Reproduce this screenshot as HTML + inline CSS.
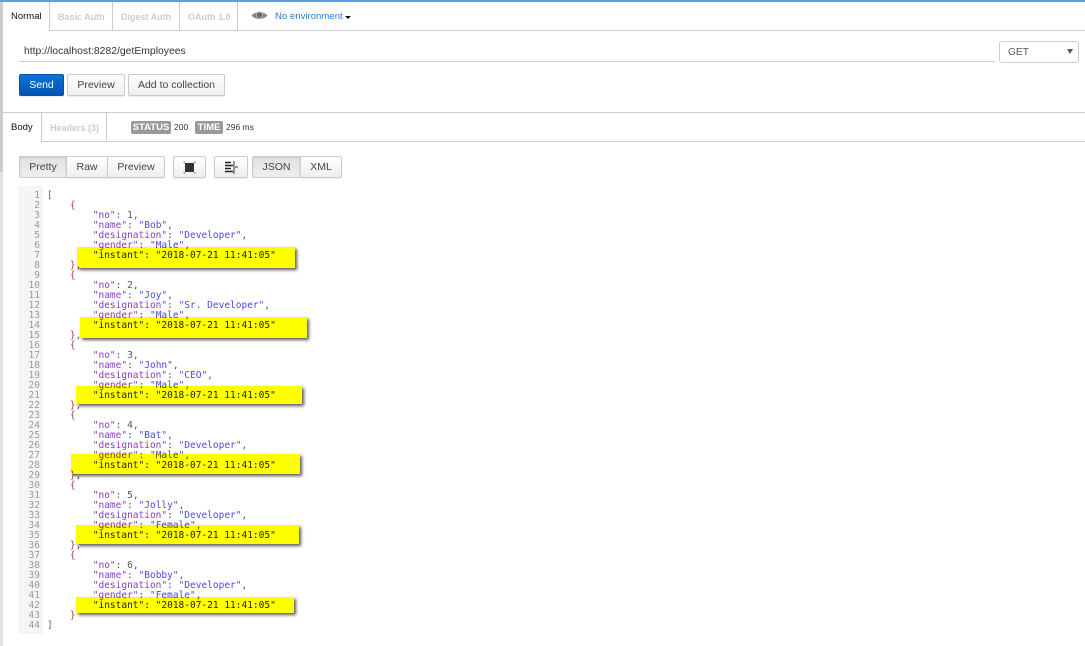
<!DOCTYPE html>
<html><head><meta charset="utf-8">
<style>
html,body{margin:0;padding:0;background:#fff}
body{width:1085px;height:646px;position:relative;overflow:hidden;font-family:"Liberation Sans",sans-serif;}
.a{position:absolute;white-space:nowrap}
.ln{position:absolute;left:0;right:0;height:1px;background:#ccc}
.btn{position:absolute;box-sizing:border-box;height:22px;border:1px solid #ccc;border-radius:2px;background:linear-gradient(#fff,#eee);font-size:10.5px;line-height:20px;text-align:center;color:#444;box-shadow:0 1px 1px rgba(0,0,0,.08)}
.on{background:linear-gradient(#e2e2e2,#eee);box-shadow:inset 0 1px 2px rgba(0,0,0,.1)}
pre{margin:0;position:absolute;font:9.5px/10px "DejaVu Sans Mono","Liberation Mono",monospace;white-space:pre}
#gut{left:18px;top:186px;width:25px;height:448px;background:#f5f5f5}
#nums{left:18px;top:191px;width:22px;text-align:right;color:#999}
#code{left:47px;top:191px;color:#a22}
.k{color:#8a3cc4}.s{color:#4a4ae0}.n{color:#555}.p{color:#555}.b{color:#a44}
.d{color:#222}
.hl{position:absolute;background:#ff0;box-shadow:2px 2px 3px rgba(0,0,0,.65);mix-blend-mode:multiply}
.badge{position:absolute;top:121px;height:13px;background:#999;border-radius:2px;color:#fff;font-size:9.5px;font-weight:bold;line-height:13px;text-align:center}
</style></head><body>
<div class="a" style="left:0;top:0;width:1085px;height:2px;background:#5a9fe8"></div>
<div class="a" style="left:0;top:2px;width:3px;height:170px;background:#ccc"></div>
<div class="a" style="left:0;top:172px;width:3px;height:474px;background:#e3e3e3"></div>

<div class="ln" style="top:30px;left:49px"></div>
<div class="a" style="left:49px;top:2px;width:1px;height:29px;background:#ccc"></div>
<div class="a" style="left:112px;top:2px;width:1px;height:28px;background:#ccc"></div>
<div class="a" style="left:179px;top:2px;width:1px;height:28px;background:#ccc"></div>
<div class="a" style="left:237px;top:2px;width:1px;height:28px;background:#ccc"></div>
<div class="a" style="left:11px;top:11px;font-size:9.5px;line-height:12px;color:#111">Normal</div>
<div class="a" style="left:58px;top:11px;font-size:9px;line-height:12px;color:#ccc;font-weight:bold;">Basic Auth</div>
<div class="a" style="left:121px;top:11px;font-size:9px;line-height:12px;color:#ccc;font-weight:bold;">Digest Auth</div>
<div class="a" style="left:188px;top:11px;font-size:9px;line-height:12px;color:#ccc;font-weight:bold;">OAuth 1.0</div>
<svg class="a" style="left:251px;top:10px" width="17" height="11" viewBox="0 0 17 11"><path d="M0.5 5.5C4 1 13 1 16.5 5.5C13 10 4 10 0.5 5.5Z" fill="#888"/><circle cx="8.5" cy="5" r="3" fill="#666" stroke="#bbb" stroke-width=".8"/></svg>
<div class="a" style="left:275px;top:11px;font-size:9.6px;line-height:12px;color:#2a7fd0">No environment</div>
<div class="a" style="left:345px;top:16px;width:0;height:0;border:3px solid transparent;border-top:3px solid #111;border-bottom:0"></div>

<div class="a" style="left:24px;top:45px;font-size:10.4px;line-height:13px;color:#333">http://localhost:8282/getEmployees</div>
<div class="a" style="left:19px;top:61px;width:976px;height:1px;background:#ccc"></div>
<div class="a" style="left:999px;top:41px;width:80px;height:22px;box-sizing:border-box;border:1px solid #ccc;border-radius:3px;background:#fff"></div>
<div class="a" style="left:1008px;top:46px;font-size:10.2px;line-height:13px;color:#555">GET</div>
<div class="a" style="left:1067px;top:49px;width:0;height:0;border:3px solid transparent;border-top:5px solid #555;border-bottom:0"></div>

<div class="btn" style="left:19px;top:74px;width:45px;background:linear-gradient(#0a74d6,#0054ae);border-color:#0055aa;color:#fff">Send</div>
<div class="btn" style="left:67px;top:74px;width:58px;">Preview</div>
<div class="btn" style="left:128px;top:74px;width:97px;">Add to collection</div>

<div class="ln" style="top:112px;left:3px"></div>
<div class="a" style="left:41px;top:112px;width:1px;height:29px;background:#ccc"></div>
<div class="a" style="left:106px;top:112px;width:1px;height:29px;background:#ccc"></div>
<div class="ln" style="top:141px;left:41px"></div>
<div class="a" style="left:11px;top:122px;font-size:9.5px;line-height:12px;color:#111">Body</div>
<div class="a" style="left:50px;top:122px;font-size:9px;line-height:12px;color:#ccc;font-weight:bold;">Headers (3)</div>
<div class="badge" style="left:131px;width:40px;">STATUS</div>
<div class="a" style="left:174px;top:122px;font-size:8.5px;line-height:11px;color:#333">200</div>
<div class="badge" style="left:195px;width:28px;">TIME</div>
<div class="a" style="left:226px;top:122px;font-size:8.5px;line-height:11px;color:#333">296 ms</div>

<div class="btn on" style="left:19px;top:156px;width:48px;">Pretty</div>
<div class="btn" style="left:66px;top:156px;width:42px;">Raw</div>
<div class="btn" style="left:107px;top:156px;width:58px;">Preview</div>
<div class="btn" style="left:173px;top:156px;width:33px;"></div>
<svg class="a" style="left:183px;top:161px" width="13" height="13" viewBox="0 0 13 13"><rect x="2" y="2" width="9" height="9" fill="#333"/><rect x="0.5" y="0.5" width="1.5" height="1.5" fill="#888"/><rect x="11" y="0.5" width="1.5" height="1.5" fill="#888"/><rect x="0.5" y="11" width="1.5" height="1.5" fill="#888"/><rect x="11" y="11" width="1.5" height="1.5" fill="#888"/></svg>
<div class="btn" style="left:214px;top:156px;width:34px;"></div>
<svg class="a" style="left:224px;top:161px" width="14" height="13" viewBox="0 0 14 13"><path d="M1 1.5h6M1 4.5h8M1 7.5h6M1 10.5h8" stroke="#222" stroke-width="1.6"/><path d="M10 0v13" stroke="#333" stroke-width="1"/><path d="M11 6h3" stroke="#555" stroke-width="1.2"/></svg>
<div class="btn on" style="left:252px;top:156px;width:49px;">JSON</div>
<div class="btn" style="left:300px;top:156px;width:42px;">XML</div>

<div class="a" id="gut"></div>
<pre id="nums">1
2
3
4
5
6
7
8
9
10
11
12
13
14
15
16
17
18
19
20
21
22
23
24
25
26
27
28
29
30
31
32
33
34
35
36
37
38
39
40
41
42
43
44</pre>
<pre id="code"><span class="b">[</span>
    <span class="b">{</span>
        <span class="k">"no"</span><span class="p">: </span><span class="n">1</span><span class="p">,</span>
        <span class="k">"name"</span><span class="p">: </span><span class="s">"Bob"</span><span class="p">,</span>
        <span class="k">"designation"</span><span class="p">: </span><span class="s">"Developer"</span><span class="p">,</span>
        <span class="k">"gender"</span><span class="p">: </span><span class="s">"Male"</span><span class="p">,</span>
        <span class="d">"instant": "2018-07-21 11:41:05"</span>
    <span class="b">}</span><span class="p">,</span>
    <span class="b">{</span>
        <span class="k">"no"</span><span class="p">: </span><span class="n">2</span><span class="p">,</span>
        <span class="k">"name"</span><span class="p">: </span><span class="s">"Joy"</span><span class="p">,</span>
        <span class="k">"designation"</span><span class="p">: </span><span class="s">"Sr. Developer"</span><span class="p">,</span>
        <span class="k">"gender"</span><span class="p">: </span><span class="s">"Male"</span><span class="p">,</span>
        <span class="d">"instant": "2018-07-21 11:41:05"</span>
    <span class="b">}</span><span class="p">,</span>
    <span class="b">{</span>
        <span class="k">"no"</span><span class="p">: </span><span class="n">3</span><span class="p">,</span>
        <span class="k">"name"</span><span class="p">: </span><span class="s">"John"</span><span class="p">,</span>
        <span class="k">"designation"</span><span class="p">: </span><span class="s">"CEO"</span><span class="p">,</span>
        <span class="k">"gender"</span><span class="p">: </span><span class="s">"Male"</span><span class="p">,</span>
        <span class="d">"instant": "2018-07-21 11:41:05"</span>
    <span class="b">}</span><span class="p">,</span>
    <span class="b">{</span>
        <span class="k">"no"</span><span class="p">: </span><span class="n">4</span><span class="p">,</span>
        <span class="k">"name"</span><span class="p">: </span><span class="s">"Bat"</span><span class="p">,</span>
        <span class="k">"designation"</span><span class="p">: </span><span class="s">"Developer"</span><span class="p">,</span>
        <span class="k">"gender"</span><span class="p">: </span><span class="s">"Male"</span><span class="p">,</span>
        <span class="d">"instant": "2018-07-21 11:41:05"</span>
    <span class="b">}</span><span class="p">,</span>
    <span class="b">{</span>
        <span class="k">"no"</span><span class="p">: </span><span class="n">5</span><span class="p">,</span>
        <span class="k">"name"</span><span class="p">: </span><span class="s">"Jolly"</span><span class="p">,</span>
        <span class="k">"designation"</span><span class="p">: </span><span class="s">"Developer"</span><span class="p">,</span>
        <span class="k">"gender"</span><span class="p">: </span><span class="s">"Female"</span><span class="p">,</span>
        <span class="d">"instant": "2018-07-21 11:41:05"</span>
    <span class="b">}</span><span class="p">,</span>
    <span class="b">{</span>
        <span class="k">"no"</span><span class="p">: </span><span class="n">6</span><span class="p">,</span>
        <span class="k">"name"</span><span class="p">: </span><span class="s">"Bobby"</span><span class="p">,</span>
        <span class="k">"designation"</span><span class="p">: </span><span class="s">"Developer"</span><span class="p">,</span>
        <span class="k">"gender"</span><span class="p">: </span><span class="s">"Female"</span><span class="p">,</span>
        <span class="d">"instant": "2018-07-21 11:41:05"</span>
    <span class="b">}</span>
<span class="b">]</span></pre>

<div class="hl" style="left:77px;top:247px;width:218px;height:21px"></div>
<div class="hl" style="left:80px;top:317px;width:227px;height:21px"></div>
<div class="hl" style="left:76px;top:386px;width:226px;height:18px"></div>
<div class="hl" style="left:71px;top:454px;width:229px;height:20px"></div>
<div class="hl" style="left:76px;top:525px;width:223px;height:19px"></div>
<div class="hl" style="left:76px;top:597px;width:218px;height:16px"></div>
</body></html>
